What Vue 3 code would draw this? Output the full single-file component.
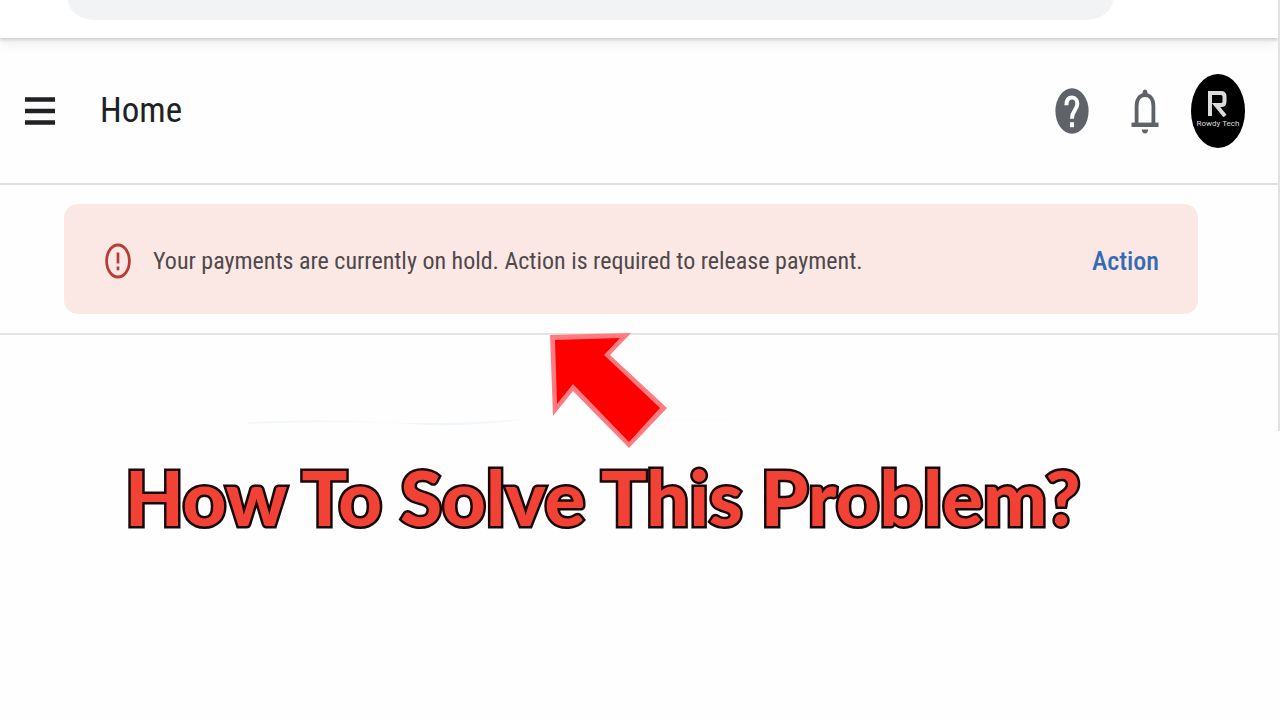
<script setup>
const title = 'Home'
const message = 'Your payments are currently on hold. Action is required to release payment.'
const headline = 'How To Solve This Problem?'
</script>

<template>
  <main class="page">
    <section class="screen">
      <div class="browser-bar">
        <div class="address"></div>
      </div>

      <header class="app-bar">
        <button class="icon-button" type="button" aria-label="Menu">
          <svg width="32" height="32" viewBox="0 0 32 32">
            <path d="M1 4.500H31M1 16H31M1 27.500H31" stroke="#202124" stroke-width="4.600" />
          </svg>
        </button>
        <h1 class="title">{{ title }}</h1>
        <div class="tools">
          <button class="icon-button" type="button" aria-label="Help">
            <svg width="34" height="46" viewBox="0 0 34 46">
              <ellipse cx="17" cy="23" rx="16.600" ry="22.800" fill="#5f6368" />
              <path d="M11.400 17.200C11.400 12 13.800 9.600 17.100 9.600C20.400 9.600 22.300 12.300 22.300 16C22.300 22 17 22.200 17 30.800" fill="none" stroke="#fff" stroke-width="4" />
              <rect x="15" y="34.200" width="4" height="5" fill="#fff" />
            </svg>
          </button>
          <button class="icon-button" type="button" aria-label="Notifications">
            <svg width="28" height="46" viewBox="0 0 28 46">
              <path d="M5.600 36V18C5.600 11 9 7 14 7S22.400 11 22.400 18V36" fill="none" stroke="#5f6368" stroke-width="3.800" />
              <path d="M11.600 8V4.500C11.600 .5 16.400 .5 16.400 4.500V8Z" fill="#5f6368" />
              <path d="M.5 34.600H27.500V39H.5Z" fill="#5f6368" />
              <path d="M10.800 41.400H17.200C17 44.200 15.800 45.400 14 45.400S11 44.200 10.800 41.400Z" fill="#5f6368" />
            </svg>
          </button>
          <button class="avatar" type="button" aria-label="Account">
            <svg width="22" height="27" viewBox="0 0 22 27" aria-hidden="true">
              <path d="M3 26V3H14Q17.500 3 17.500 6.500V11.500Q17.500 15 14 15H9L18 26" fill="none" stroke="#dcdcdc" stroke-width="4" />
            </svg>
            <span class="avatar-name">Rowdy Tech</span>
          </button>
        </div>
      </header>

      <div class="notice-row">
        <div class="notice" role="alert">
          <svg class="alert-icon" width="26" height="36" viewBox="0 0 26 36">
            <ellipse cx="13" cy="18" rx="11.400" ry="16" fill="none" stroke="#b93c36" stroke-width="2.800" />
            <path d="M13 9.400V20.400M13 23.600V27.200" stroke="#b93c36" stroke-width="2.700" />
          </svg>
          <p class="message">{{ message }}</p>
          <a class="action" href="#">Action</a>
        </div>
      </div>

      <div class="content">
        <svg class="wave" width="640" height="12" viewBox="0 0 640 12">
          <path d="M0 3Q70 0 130 3T280 0Q230 7 180 6Q120 2 70 3Q30 4 0 5Z" fill="#f1f7fb" />
          <path d="M390 0Q450 4 510 1Z" fill="#fafcfe" />
        </svg>
        <svg class="arrow" width="120" height="116" viewBox="0 0 120 116">
          <path d="M0 2L81 0L60 22L117 75L79 115L23 58L3 83Z" fill="#ff7b80" />
          <path d="M5 7L70 5L54 22L110 75L79 109L23 51L7 71Z" fill="#f00" />
        </svg>
      </div>
    </section>

    <h2 class="headline">{{ headline }}</h2>
  </main>
</template>

<style>
body {
  margin: 0;
  background: #fefefe;
}
</style>

<style scoped>
.page {
  font-family: "Roboto Condensed", Roboto, sans-serif;
  color: #202124;
}

.screen {
  border-right: 2px solid #e2e2e4;
}

.browser-bar {
  position: relative;
  height: 38px;
  padding: 0 165px 0 68px;
  box-sizing: border-box;
  background: #fff;
  box-shadow: 0 2px 3px #d0d0d0, 0 4px 14px #eaeaea;
  clip-path: inset(0 0 -24px 0);
}

.address {
  height: 20px;
  border-radius: 0 0 28px 28px / 0 0 20px 20px;
  background: #f1f3f4;
}

.app-bar {
  display: flex;
  align-items: center;
  height: 145px;
  padding: 0 33px 0 24px;
  border-bottom: 2px solid #e0e0e0;
}

button {
  padding: 0;
  border: 0;
  background: none;
  cursor: pointer;
}

.icon-button,
svg {
  display: block;
}

.title {
  margin: 0 0 0 44px;
  font-size: 35px;
  line-height: 44px;
  font-weight: 400;
}

.tools {
  display: flex;
  align-items: center;
  gap: 42px;
  margin-left: auto;
}

.avatar {
  display: flex;
  flex-direction: column;
  align-items: center;
  width: 54px;
  height: 74px;
  margin-left: -10px;
  padding-top: 16px;
  border-radius: 50%;
  background: #000;
}

.avatar-name {
  font: 8px/14px Roboto, sans-serif;
  color: #dcdcdc;
  white-space: nowrap;
}

.notice-row {
  padding: 19px 80px 19px 64px;
  border-bottom: 2px solid #e4e4e4;
}

.notice {
  display: flex;
  align-items: center;
  min-height: 110px;
  padding: 3px 39px 0 41px;
  box-sizing: border-box;
  border-radius: 14px;
  background: #fbe8e5;
}

.message {
  margin: 0 0 0 22px;
  font-size: 24px;
  line-height: 36px;
  color: #4f484b;
}

.action {
  margin-left: auto;
  font-size: 26px;
  line-height: 36px;
  font-weight: 500;
  color: #356bb3;
  text-decoration: none;
}

.content {
  position: relative;
  height: 96px;
}

.wave {
  position: absolute;
  left: 248px;
  bottom: 0;
}

.arrow {
  position: absolute;
  left: 550px;
  top: -2px;
}

.headline {
  margin: 22px 0 0 125px;
  font-family: Lato, sans-serif;
  font-size: 76px;
  line-height: 88px;
  font-weight: 900;
  color: #f24236;
  -webkit-text-stroke: 5px #160808;
  paint-order: stroke fill;
}
</style>
